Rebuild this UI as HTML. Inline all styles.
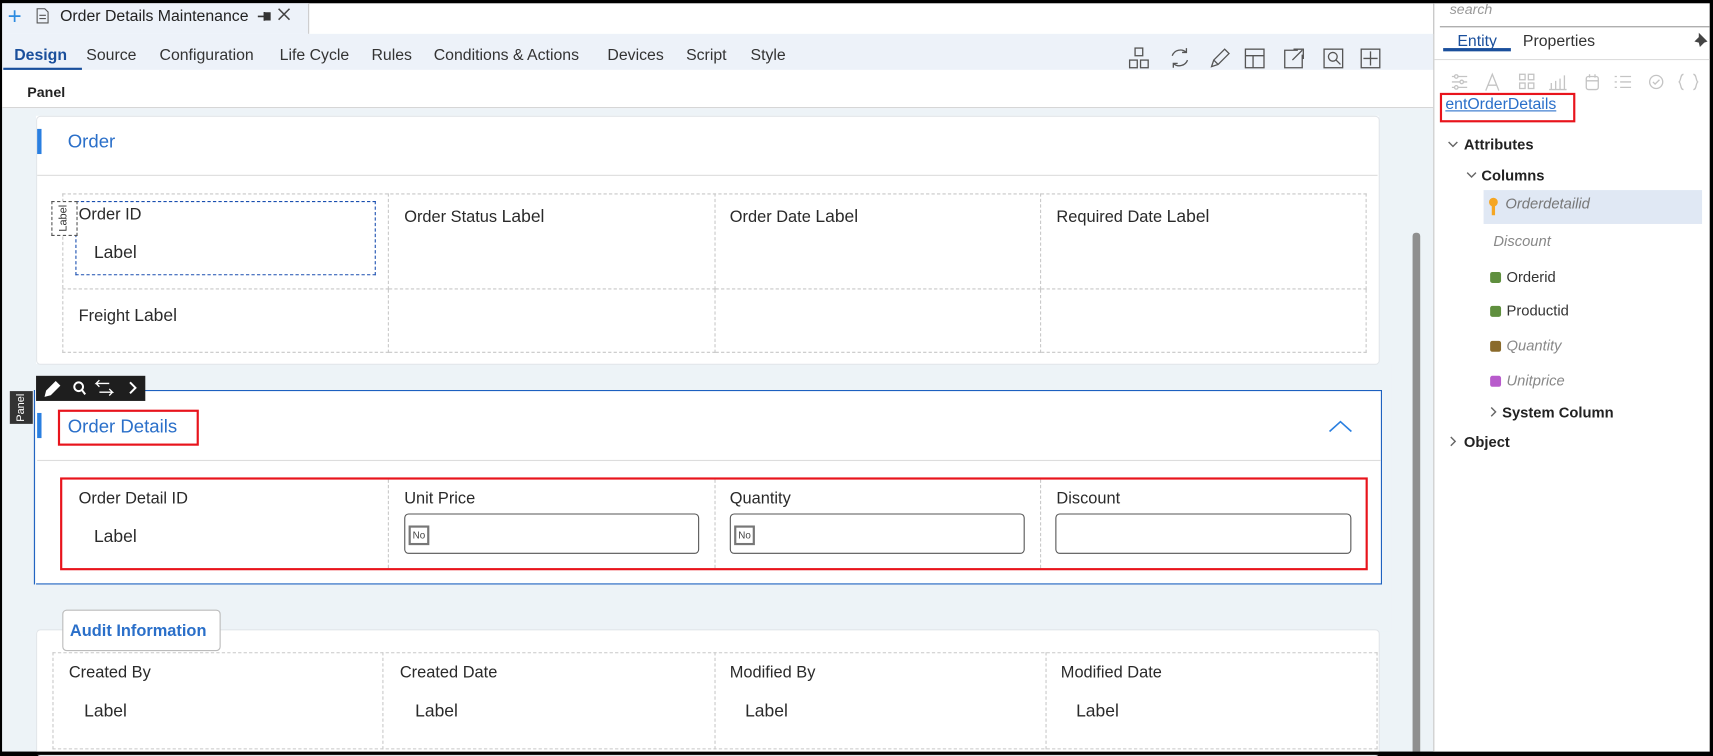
<!DOCTYPE html>
<html><head><meta charset="utf-8"><style>
html,body{margin:0;padding:0;width:1713px;height:755px;overflow:hidden;background:#000}
#s{position:absolute;left:0;top:0;width:1568px;height:691px;transform:scale(1.09247);transform-origin:0 0;background:#000;font-family:"Liberation Sans",sans-serif;color:#222}
.a{position:absolute}
.t{font-size:15px;color:#2a2a2a}
.nav span{position:absolute;top:43px;font-size:14.5px;color:#333}
.card{background:#fff;border-radius:4px;border:1px solid #e2e6ea}
.cell{position:absolute;border-right:1px dashed #c8c8c8;border-bottom:1px dashed #c8c8c8;box-sizing:border-box}
.red{position:absolute;border:2px solid #e8141c;box-sizing:border-box}
.inp{position:absolute;border:1px solid #555;border-radius:4px;height:37px;box-sizing:border-box;background:#fff}
.no{position:absolute;left:3px;top:10px;width:19px;height:18px;border:2px solid #777;box-sizing:border-box;font-size:9px;line-height:14px;color:#444;text-align:center}
.tree{position:absolute;font-size:13.5px}
.sq{display:inline-block;width:10px;height:10px;border-radius:2px;margin-right:5px;vertical-align:-1px}
</style></head><body><div id="s">
<div class="a" style="left:2px;top:3px;width:1310px;height:685px;background:#fff"></div>
<div class="a" style="left:2px;top:3px;width:280px;height:28px;background:#edf2f9;border-right:1px solid #ccc"></div>
<div class="a" style="left:2px;top:31px;width:1310px;height:33px;background:#edf2f9"></div>
<div class="a" style="left:7px;top:2px;font-size:22px;color:#2c8be0">+</div>
<svg class="a" style="left:33px;top:7px" width="12" height="15"><path d="M1 1h7l3 3v10H1z" fill="none" stroke="#555"/><path d="M3 7h6M3 10h6" stroke="#555"/></svg>
<div class="a" style="left:55px;top:7px;font-size:14.5px;color:#222">Order Details Maintenance</div>
<svg class="a" style="left:235px;top:9px" width="14" height="12"><path d="M1 6h6M7 2v8M7 3h5v6H7" fill="#333" stroke="#333" stroke-width="1.5"/></svg>
<svg class="a" style="left:254px;top:7px" width="12" height="12"><path d="M1 1l10 10M11 1L1 11" stroke="#444" stroke-width="1.4"/></svg>
<div class="nav">
<span style="left:13px;color:#1a4f9c;font-weight:bold">Design</span>
<span style="left:79px">Source</span><span style="left:146px">Configuration</span><span style="left:256px">Life Cycle</span><span style="left:340px">Rules</span><span style="left:397px">Conditions &amp; Actions</span><span style="left:556px">Devices</span><span style="left:628px">Script</span><span style="left:687px">Style</span>
</div>
<div class="a" style="left:3px;top:62px;width:72px;height:3px;background:#1a4f9c"></div>
<svg class="a" style="left:1030px;top:42px" width="240" height="24" fill="none" stroke="#555" stroke-width="1.2">
<rect x="9" y="2" width="7" height="7"/><rect x="4" y="13" width="7" height="7"/><rect x="14" y="13" width="7" height="7"/>
<path d="M56 6a8 8 0 0 0-13 3M44 16a8 8 0 0 0 13-3M56 2v4h-4M44 20v-4h4"/>
<path d="M79 19l2-6 10-10 4 4-10 10z M81 13l4 4"/>
<rect x="110" y="3" width="17" height="17"/><path d="M110 9h17M117 9v11"/>
<path d="M158 4h-12v16h16v-12M154 3h9v9M162 4l-9 9"/>
<rect x="182" y="3" width="17" height="17"/><circle cx="190" cy="10" r="4"/><path d="M193 13l4 4"/>
<rect x="216" y="3" width="17" height="17"/><path d="M224.5 5v13M218 11.5h13"/>
</svg>
<div class="a" style="left:2px;top:64px;width:1310px;height:34px;background:#fff;border-bottom:1px solid #d4d4d4"></div>
<div class="a" style="left:25px;top:77px;font-size:13px;font-weight:bold;color:#222">Panel</div>
<div class="a" style="left:2px;top:99px;width:1310px;height:589px;background:#edf3f7"></div>
<div class="a" style="left:33px;top:106px;width:1229px;height:582px;background:#fff"></div>
<div class="a" style="left:1293px;top:213px;width:7px;height:475px;background:#8f8f8f;border-radius:3px 3px 0 0"></div>
<div class="a" style="left:18px;top:333px;width:1256px;height:245px;background:#edf3f7"></div>
<div class="a card" style="left:33px;top:106px;width:1228px;height:226px"></div>
<div class="a" style="left:34px;top:118px;width:4px;height:23px;background:#2a7fe0"></div>
<div class="a" style="left:62px;top:120px;font-size:17px;color:#2a6fc9">Order</div>
<div class="a" style="left:34px;top:160px;width:1227px;height:1px;background:#ddd"></div>
<div class="a" style="left:57px;top:177px;width:1193px;height:145px;border-left:1px dashed #c8c8c8;border-top:1px dashed #c8c8c8"></div>
<div class="cell" style="left:57px;top:177px;width:299px;height:88px"></div>
<div class="cell" style="left:356px;top:177px;width:299px;height:88px"></div>
<div class="cell" style="left:655px;top:177px;width:298px;height:88px"></div>
<div class="cell" style="left:953px;top:177px;width:298px;height:88px"></div>
<div class="cell" style="left:57px;top:265px;width:299px;height:58px"></div>
<div class="cell" style="left:356px;top:265px;width:299px;height:58px"></div>
<div class="cell" style="left:655px;top:265px;width:298px;height:58px"></div>
<div class="cell" style="left:953px;top:265px;width:298px;height:58px"></div>
<div class="a" style="left:69px;top:184px;width:275px;height:68px;border:1px dashed #1a4fb0;box-sizing:border-box"></div>
<div class="a" style="left:47px;top:184px;width:24px;height:32px;border:1px dashed #555;box-sizing:border-box;background:#fff"></div>
<div class="a" style="left:53px;top:212px;font-size:10px;transform:rotate(-90deg);transform-origin:0 0;color:#333">Label</div>
<div class="a t" style="left:72px;top:188px">Order ID</div>
<div class="a t" style="left:86px;top:223px;font-size:16px">Label</div>
<div class="a t" style="left:370px;top:190px">Order Status <span style="font-size:16px">Label</span></div>
<div class="a t" style="left:668px;top:190px">Order Date <span style="font-size:16px">Label</span></div>
<div class="a t" style="left:967px;top:190px">Required Date <span style="font-size:16px">Label</span></div>
<div class="a t" style="left:72px;top:281px">Freight <span style="font-size:16px">Label</span></div>
<div class="a" style="left:33px;top:357px;width:1232px;height:178px;background:#fff;border-top:1px solid #1a5fbf;border-right:1px solid #1a5fbf;border-bottom:1px solid #1a5fbf;box-sizing:border-box"></div>
<div class="a" style="left:31px;top:357px;width:1px;height:178px;background:#1a5fbf"></div>
<div class="a" style="left:33px;top:344px;width:100px;height:23px;background:#1e1e1e"></div>
<svg class="a" style="left:38px;top:346px" width="95" height="20" fill="none" stroke="#fff" stroke-width="1.8">
<path d="M4 16l1-4 8-8 3 3-8 8z" fill="#fff"/><circle cx="34" cy="8" r="4"/><path d="M37 11l3 4"/>
<path d="M62 5h-12l3-3M50 5l3 3M53 13h12l-3-3M65 13l-3 3" stroke-width="1.2"/><path d="M81 4l5 5-5 5"/>
</svg>
<div class="a" style="left:9px;top:358px;width:21px;height:30px;background:#333"></div>
<div class="a" style="left:14px;top:386px;font-size:10px;color:#fff;transform:rotate(-90deg);transform-origin:0 0">Panel</div>
<div class="a" style="left:34px;top:378px;width:4px;height:23px;background:#2a7fe0"></div>
<div class="a" style="left:62px;top:381px;font-size:17px;color:#2a6fc9">Order Details</div>
<div class="red" style="left:53px;top:375px;width:129px;height:33px"></div>
<svg class="a" style="left:1215px;top:383px" width="24" height="14"><path d="M2 12l10-9 10 9" fill="none" stroke="#2a7fe0" stroke-width="1.5"/></svg>
<div class="a" style="left:34px;top:421px;width:1230px;height:1px;background:#ddd"></div>
<div class="a" style="left:355px;top:439px;height:81px;border-left:1px dashed #c8c8c8"></div>
<div class="a" style="left:654px;top:439px;height:81px;border-left:1px dashed #c8c8c8"></div>
<div class="a" style="left:952px;top:439px;height:81px;border-left:1px dashed #c8c8c8"></div>
<div class="red" style="left:55px;top:437px;width:1197px;height:85px"></div>
<div class="a t" style="left:72px;top:448px">Order Detail ID</div>
<div class="a t" style="left:86px;top:483px;font-size:16px">Label</div>
<div class="a t" style="left:370px;top:448px">Unit Price</div>
<div class="inp" style="left:370px;top:470px;width:270px"><div class="no">No</div></div>
<div class="a t" style="left:668px;top:448px">Quantity</div>
<div class="inp" style="left:668px;top:470px;width:270px"><div class="no">No</div></div>
<div class="a t" style="left:967px;top:448px">Discount</div>
<div class="inp" style="left:966px;top:470px;width:271px"></div>
<div class="a card" style="left:33px;top:576px;width:1228px;height:114px"></div>
<div class="a" style="left:48px;top:597px;width:1213px;height:89px;border:1px dashed #c8c8c8;box-sizing:border-box"></div>
<div class="a" style="left:350px;top:597px;height:89px;border-left:1px dashed #c8c8c8"></div>
<div class="a" style="left:654px;top:597px;height:89px;border-left:1px dashed #c8c8c8"></div>
<div class="a" style="left:957px;top:597px;height:89px;border-left:1px dashed #c8c8c8"></div>
<div class="a" style="left:57px;top:558px;width:145px;height:38px;background:#fff;border:1px solid #bbb;border-radius:4px;box-sizing:border-box"></div>
<div class="a" style="left:64px;top:569px;font-size:15px;font-weight:bold;color:#2a6fc9">Audit Information</div>
<div class="a t" style="left:63px;top:607px">Created By</div><div class="a t" style="left:77px;top:643px;font-size:16px">Label</div>
<div class="a t" style="left:366px;top:607px">Created Date</div><div class="a t" style="left:380px;top:643px;font-size:16px">Label</div>
<div class="a t" style="left:668px;top:607px">Modified By</div><div class="a t" style="left:682px;top:643px;font-size:16px">Label</div>
<div class="a t" style="left:971px;top:607px">Modified Date</div><div class="a t" style="left:985px;top:643px;font-size:16px">Label</div>
<div class="a" style="left:0;top:688px;width:1568px;height:3px;background:#000"></div>
<div class="a" style="left:1312px;top:3px;width:253px;height:685px;background:#fff;border-left:1px solid #ccc;box-sizing:border-box"></div>
<div class="a" style="left:1327px;top:1px;font-size:13px;font-style:italic;color:#999">search</div>
<div class="a" style="left:1318px;top:24px;width:247px;height:1px;background:#999"></div>
<div class="a" style="left:1334px;top:30px;font-size:14.5px;color:#1a4f9c">Entity</div>
<div class="a" style="left:1394px;top:30px;font-size:14.5px;color:#333">Properties</div>
<div class="a" style="left:1321px;top:44px;width:62px;height:3px;background:#1a4f9c"></div>
<div class="a" style="left:1313px;top:54px;width:252px;height:1px;background:#ddd"></div>
<svg class="a" style="left:1547px;top:28px" width="18" height="18"><path d="M8 2l8 8-3 1-4 4-1-4-5 5 5-5-4-1 4-4z" fill="#444"/></svg>
<svg class="a" style="left:1326px;top:66px" width="235" height="18" fill="none" stroke="#c4c4c4" stroke-width="1.2">
<path d="M3 4h14M3 9h14M3 14h14"/><circle cx="7" cy="4" r="1.6" fill="#fff"/><circle cx="12" cy="9" r="1.6" fill="#fff"/><circle cx="7" cy="14" r="1.6" fill="#fff"/>
<path d="M34 17l6-15 6 15M36 12h8"/>
<rect x="65" y="2" width="5" height="5"/><rect x="73" y="2" width="5" height="5"/><rect x="65" y="10" width="5" height="5"/><rect x="73" y="10" width="5" height="5"/>
<path d="M92 16h16M94 16v-6M98 16v-8M102 16v-10M106 16v-13"/>
<rect x="126" y="4" width="11" height="12" rx="2"/><path d="M126 8h11M129 2v3M134 2v3"/>
<path d="M152 4h2M152 9h2M152 14h2M157 4h10M157 9h10M157 14h10"/>
<circle cx="190" cy="9" r="6"/><path d="M187 9l2 2 4-4"/>
<path d="M215 2c-3 0-2 5-4 7 2 2 1 7 4 7M224 2c3 0 2 5 4 7-2 2-1 7-4 7"/>
</svg>
<div class="a" style="left:1323px;top:88px;font-size:14.5px;color:#2a6fc9;text-decoration:underline">entOrderDetails</div>
<div class="red" style="left:1318px;top:85px;width:124px;height:27px"></div>
<svg class="a" style="left:1325px;top:128px" width="10" height="8"><path d="M1 2l4 4 4-4" fill="none" stroke="#666" stroke-width="1.3"/></svg>
<div class="tree" style="left:1340px;top:125px;font-weight:bold;color:#222">Attributes</div>
<svg class="a" style="left:1342px;top:156px" width="10" height="8"><path d="M1 2l4 4 4-4" fill="none" stroke="#666" stroke-width="1.3"/></svg>
<div class="tree" style="left:1356px;top:153px;font-weight:bold;color:#222">Columns</div>
<div class="a" style="left:1358px;top:174px;width:200px;height:31px;background:#e0e8f4"></div>
<svg class="a" style="left:1362px;top:180px" width="10" height="18"><circle cx="5" cy="5" r="4" fill="#f5a623"/><path d="M5 8v9" stroke="#f5a623" stroke-width="3"/></svg>
<div class="tree" style="left:1378px;top:179px;font-style:italic;color:#777">Orderdetailid</div>
<div class="tree" style="left:1367px;top:213px;font-style:italic;color:#888">Discount</div>
<div class="tree" style="left:1364px;top:246px;color:#333"><span class="sq" style="background:#5f8f3e"></span>Orderid</div>
<div class="tree" style="left:1364px;top:277px;color:#333"><span class="sq" style="background:#5f8f3e"></span>Productid</div>
<div class="tree" style="left:1364px;top:309px;font-style:italic;color:#888"><span class="sq" style="background:#8a6a2a"></span>Quantity</div>
<div class="tree" style="left:1364px;top:341px;font-style:italic;color:#888"><span class="sq" style="background:#b85bcc"></span>Unitprice</div>
<svg class="a" style="left:1363px;top:372px" width="8" height="10"><path d="M2 1l4 4-4 4" fill="none" stroke="#666" stroke-width="1.3"/></svg>
<div class="tree" style="left:1375px;top:370px;font-weight:bold;color:#222">System Column</div>
<svg class="a" style="left:1326px;top:399px" width="8" height="10"><path d="M2 1l4 4-4 4" fill="none" stroke="#666" stroke-width="1.3"/></svg>
<div class="tree" style="left:1340px;top:397px;font-weight:bold;color:#222">Object</div>
</div></body></html>
